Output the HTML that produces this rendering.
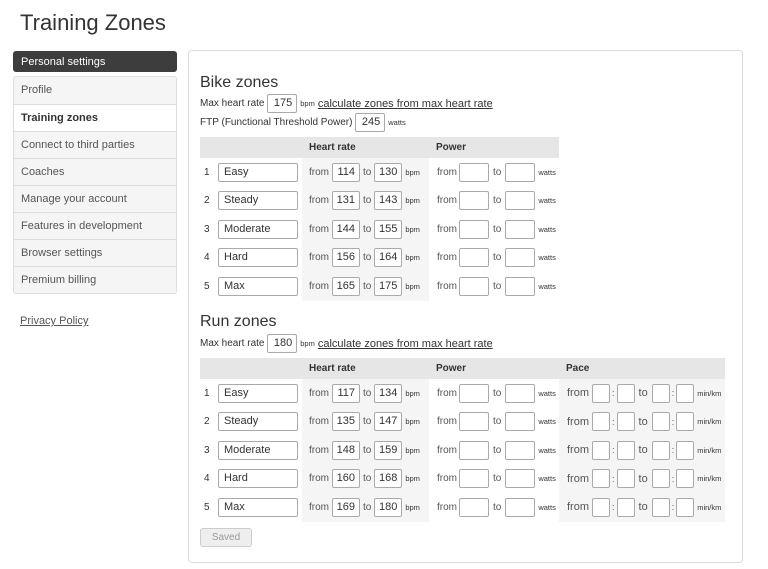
<!DOCTYPE html>
<html><head><meta charset="utf-8"><style>
*{box-sizing:border-box;margin:0;padding:0}
body{width:768px;height:569px;background:#fff;font-family:"Liberation Sans",sans-serif;color:#333;position:relative;overflow:hidden;font-size:11px}
.abs{position:absolute}
h1{position:absolute;left:20px;top:10px;font-size:22px;font-weight:normal;color:#333}
.sh{left:13px;top:51px;width:164px;height:21px;background:#3d3d3d;color:#fff;border-radius:3px;padding:5px 8px;font-size:11px}
.list{left:13px;top:76px;width:164px;border:1px solid #ddd;border-radius:3px;overflow:hidden}
.list div{height:27px;line-height:26px;padding-left:7px;background:#f5f5f5;border-top:1px solid #ddd;color:#555}
.list div:first-child{border-top:none}
.list .act{background:#fff;font-weight:bold;color:#333}
.pp{left:20px;top:315px;color:#555;text-decoration:underline}
.panel{left:188px;top:50px;width:555px;height:513px;border:1px solid #ddd;border-radius:4px}
h2{position:absolute;left:200px;font-size:16px;font-weight:normal;color:#333}
.line{position:absolute;left:200px;display:flex;align-items:center;font-size:10px;color:#333;white-space:nowrap}
.in{display:inline-block;border:1px solid #aaa;border-radius:2px;height:19px;background:#fff;text-align:right;padding-right:4px;line-height:17px;font-size:11px;color:#333;flex:none}
.sm{font-size:7.5px;margin:0 3px}
.u{text-decoration:underline;font-size:11px}
table{position:absolute;left:200px;border-collapse:collapse;font-size:10px;table-layout:fixed}
th{height:21px;background:#e6e6e6;text-align:left;font-size:10px;padding-left:7px}
td{height:28.5px;padding:0;white-space:nowrap;overflow:hidden}
.hr,.pa{background:#f5f5f5}
.c{display:flex;align-items:center}
.nm{width:80px;text-align:left;padding-left:5px;color:#333}
.g{color:#555}
.hr .f{margin-left:7px;margin-right:3px}
.t{margin:0 3px}
.pw .f{margin-left:8px;margin-right:2px}
.pw .t{margin:0 4px}
.pa .f{margin-left:8px;margin-right:3px;font-size:11px}
.pa .t{margin:0 4px;font-size:11px}
.col{margin:0 2px;font-size:9px}
.h28{width:28px}.h30{width:30px}.h18{width:18px}
td:first-child{padding-left:4px}
</style></head><body>
<h1>Training Zones</h1>
<div class="abs sh">Personal settings</div>
<div class="abs list">
<div>Profile</div><div class="act">Training zones</div><div>Connect to third parties</div><div>Coaches</div><div>Manage your account</div><div>Features in development</div><div>Browser settings</div><div>Premium billing</div>
</div>
<div class="abs pp">Privacy Policy</div>
<div class="abs panel"></div>

<h2 style="top:74px">Bike zones</h2>
<div class="line" style="top:94px">Max heart rate&nbsp;<span class="in" style="width:30px">175</span><span class="sm">bpm</span><span class="u">calculate zones from max heart rate</span></div>
<div class="line" style="top:113px">FTP (Functional Threshold Power)&nbsp;<span class="in" style="width:30px">245</span><span class="sm">watts</span></div>

<table style="top:137px;width:359px">
<colgroup><col style="width:18px"><col style="width:84px"><col style="width:127px"><col style="width:130px"></colgroup>
<tr><th></th><th></th><th>Heart rate</th><th>Power</th></tr>
<tr><td>1</td><td><span class="in nm">Easy</span></td><td class="hr"><div class="c"><span class="g f">from</span><span class="in h28">114</span><span class="g t">to</span><span class="in h28">130</span><span class="sm">bpm</span></div></td><td class="pw"><div class="c"><span class="g f">from</span><span class="in h30"></span><span class="g t">to</span><span class="in h30"></span><span class="sm">watts</span></div></td></tr>
<tr><td>2</td><td><span class="in nm">Steady</span></td><td class="hr"><div class="c"><span class="g f">from</span><span class="in h28">131</span><span class="g t">to</span><span class="in h28">143</span><span class="sm">bpm</span></div></td><td class="pw"><div class="c"><span class="g f">from</span><span class="in h30"></span><span class="g t">to</span><span class="in h30"></span><span class="sm">watts</span></div></td></tr>
<tr><td>3</td><td><span class="in nm">Moderate</span></td><td class="hr"><div class="c"><span class="g f">from</span><span class="in h28">144</span><span class="g t">to</span><span class="in h28">155</span><span class="sm">bpm</span></div></td><td class="pw"><div class="c"><span class="g f">from</span><span class="in h30"></span><span class="g t">to</span><span class="in h30"></span><span class="sm">watts</span></div></td></tr>
<tr><td>4</td><td><span class="in nm">Hard</span></td><td class="hr"><div class="c"><span class="g f">from</span><span class="in h28">156</span><span class="g t">to</span><span class="in h28">164</span><span class="sm">bpm</span></div></td><td class="pw"><div class="c"><span class="g f">from</span><span class="in h30"></span><span class="g t">to</span><span class="in h30"></span><span class="sm">watts</span></div></td></tr>
<tr><td>5</td><td><span class="in nm">Max</span></td><td class="hr"><div class="c"><span class="g f">from</span><span class="in h28">165</span><span class="g t">to</span><span class="in h28">175</span><span class="sm">bpm</span></div></td><td class="pw"><div class="c"><span class="g f">from</span><span class="in h30"></span><span class="g t">to</span><span class="in h30"></span><span class="sm">watts</span></div></td></tr>
</table>

<h2 style="top:313px">Run zones</h2>
<div class="line" style="top:334px">Max heart rate&nbsp;<span class="in" style="width:30px">180</span><span class="sm">bpm</span><span class="u">calculate zones from max heart rate</span></div>

<table style="top:358px;width:525px">
<colgroup><col style="width:18px"><col style="width:84px"><col style="width:127px"><col style="width:130px"><col style="width:166px"></colgroup>
<tr><th></th><th></th><th>Heart rate</th><th>Power</th><th>Pace</th></tr>
<tr><td>1</td><td><span class="in nm">Easy</span></td><td class="hr"><div class="c"><span class="g f">from</span><span class="in h28">117</span><span class="g t">to</span><span class="in h28">134</span><span class="sm">bpm</span></div></td><td class="pw"><div class="c"><span class="g f">from</span><span class="in h30"></span><span class="g t">to</span><span class="in h30"></span><span class="sm">watts</span></div></td><td class="pa"><div class="c"><span class="g f">from</span><span class="in h18"></span><span class="g col">:</span><span class="in h18"></span><span class="g t">to</span><span class="in h18"></span><span class="g col">:</span><span class="in h18"></span><span class="sm">min/km</span></div></td></tr>
<tr><td>2</td><td><span class="in nm">Steady</span></td><td class="hr"><div class="c"><span class="g f">from</span><span class="in h28">135</span><span class="g t">to</span><span class="in h28">147</span><span class="sm">bpm</span></div></td><td class="pw"><div class="c"><span class="g f">from</span><span class="in h30"></span><span class="g t">to</span><span class="in h30"></span><span class="sm">watts</span></div></td><td class="pa"><div class="c"><span class="g f">from</span><span class="in h18"></span><span class="g col">:</span><span class="in h18"></span><span class="g t">to</span><span class="in h18"></span><span class="g col">:</span><span class="in h18"></span><span class="sm">min/km</span></div></td></tr>
<tr><td>3</td><td><span class="in nm">Moderate</span></td><td class="hr"><div class="c"><span class="g f">from</span><span class="in h28">148</span><span class="g t">to</span><span class="in h28">159</span><span class="sm">bpm</span></div></td><td class="pw"><div class="c"><span class="g f">from</span><span class="in h30"></span><span class="g t">to</span><span class="in h30"></span><span class="sm">watts</span></div></td><td class="pa"><div class="c"><span class="g f">from</span><span class="in h18"></span><span class="g col">:</span><span class="in h18"></span><span class="g t">to</span><span class="in h18"></span><span class="g col">:</span><span class="in h18"></span><span class="sm">min/km</span></div></td></tr>
<tr><td>4</td><td><span class="in nm">Hard</span></td><td class="hr"><div class="c"><span class="g f">from</span><span class="in h28">160</span><span class="g t">to</span><span class="in h28">168</span><span class="sm">bpm</span></div></td><td class="pw"><div class="c"><span class="g f">from</span><span class="in h30"></span><span class="g t">to</span><span class="in h30"></span><span class="sm">watts</span></div></td><td class="pa"><div class="c"><span class="g f">from</span><span class="in h18"></span><span class="g col">:</span><span class="in h18"></span><span class="g t">to</span><span class="in h18"></span><span class="g col">:</span><span class="in h18"></span><span class="sm">min/km</span></div></td></tr>
<tr><td>5</td><td><span class="in nm">Max</span></td><td class="hr"><div class="c"><span class="g f">from</span><span class="in h28">169</span><span class="g t">to</span><span class="in h28">180</span><span class="sm">bpm</span></div></td><td class="pw"><div class="c"><span class="g f">from</span><span class="in h30"></span><span class="g t">to</span><span class="in h30"></span><span class="sm">watts</span></div></td><td class="pa"><div class="c"><span class="g f">from</span><span class="in h18"></span><span class="g col">:</span><span class="in h18"></span><span class="g t">to</span><span class="in h18"></span><span class="g col">:</span><span class="in h18"></span><span class="sm">min/km</span></div></td></tr>
</table>

<div class="abs" style="left:200px;top:528px;width:52px;height:19px;border:1px solid #ccc;border-radius:3px;background:#eee;color:#999;font-size:10px;text-align:center;line-height:17px">Saved</div>
</body></html>
